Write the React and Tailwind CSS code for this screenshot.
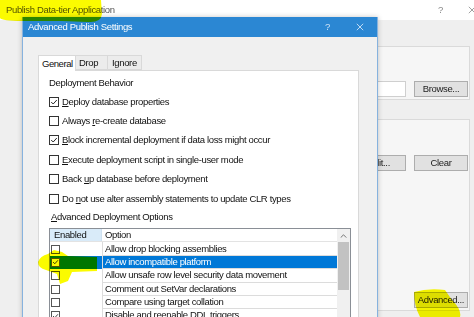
import React from "react";

const behaviors = [
  { pre: "", key: "D", post: "eploy database properties", checked: true },
  { pre: "Always ", key: "r", post: "e-create database", checked: false },
  { pre: "", key: "B", post: "lock incremental deployment if data loss might occur", checked: true },
  { pre: "", key: "E", post: "xecute deployment script in single-user mode", checked: false },
  { pre: "Back ", key: "u", post: "p database before deployment", checked: false },
  { pre: "Do ", key: "n", post: "ot use alter assembly statements to update CLR types", checked: false },
];

const options = [
  { label: "Allow drop blocking assemblies", checked: false },
  { label: "Allow incompatible platform", checked: true, selected: true },
  { label: "Allow unsafe row level security data movement", checked: false },
  { label: "Comment out SetVar declarations", checked: false },
  { label: "Compare using target collation", checked: false },
  { label: "Disable and reenable DDL triggers", checked: true },
];

const CheckBox = ({ checked, size = "h-[10px] w-[10px]", border = "border-[#333]" }) => (
  <span className={`flex shrink-0 items-center justify-center border bg-white ${size} ${border}`}>
    {checked && (
      <svg viewBox="0 0 10 10" className="h-[8px] w-[8px]">
        <path d="M1.5 5 L4 7.5 L8.5 2.5" fill="none" stroke="#1f1f1f" strokeWidth="1.2" />
      </svg>
    )}
  </span>
);

const Btn = ({ children, className = "" }) => (
  <div className={`flex h-[16px] w-[54px] shrink-0 items-center justify-center whitespace-nowrap border border-[#adadad] bg-[#e1e1e1] text-[#222] ${className}`}>
    {children}
  </div>
);

const CloseX = ({ color }) => (
  <svg viewBox="0 0 10 10" className="h-[8px] w-[8px]">
    <path d="M1 1 L9 9 M9 1 L1 9" stroke={color} strokeWidth="1" />
  </svg>
);

export default function App() {
  return (
    <div className="relative h-[317px] w-[474px] overflow-hidden bg-[#efefef] font-['Liberation_Sans',Arial,sans-serif] text-[9.5px] leading-[12px] tracking-[-0.35px] text-[#111]">
      {/* background window: Publish Data-tier Application */}
      <div className="flex h-full flex-col">
        <div className="flex h-[20px] shrink-0 items-center bg-white pl-[6px] text-[#555]">
          <span>Publish Data-tier Application</span>
          <span className="ml-auto mr-[25px] text-[#888]">?</span>
          <span className="-mr-[2px]">
            <CloseX color="#888" />
          </span>
        </div>
        <div className="flex flex-1 flex-col pl-[30px] pr-[4px]">
          <div className="mt-[26px] flex h-[54px] items-end justify-end gap-[8px] border border-[#dadada] bg-[#f6f6f6] pb-[2px] pr-[1px]">
            <div className="h-[16px] w-[60px] border border-[#cfcfcf] bg-white" />
            <Btn>Browse...</Btn>
          </div>
          <div className="mt-[19px] flex h-[192px] flex-col border border-[#dadada] bg-[#f6f6f6] pb-[2px] pr-[1px] pt-[35px]">
            <div className="flex justify-end gap-[8px]">
              <Btn>Edit...</Btn>
              <Btn>Clear</Btn>
            </div>
            <div className="mt-auto flex justify-end">
              <Btn className="border-[#7a7a7a]">Advanced...</Btn>
            </div>
          </div>
        </div>
      </div>

      {/* dialog: Advanced Publish Settings */}
      <div className="absolute left-[22px] top-[17px] flex h-[310px] w-[356px] flex-col border-x border-b border-[#86b2de] bg-[#f0f0f0] shadow-[0_0_5px_rgba(0,0,0,0.22)]">
        <div className="flex h-[20px] shrink-0 items-center bg-[#2b87d3] pl-[5px] text-white">
          <span>Advanced Publish Settings</span>
          <span className="ml-auto text-[#cfe3f5]">?</span>
          <span className="ml-[26px] mr-[13px]">
            <CloseX color="#e6f0fa" />
          </span>
        </div>

        <div className="ml-[15px] mt-[18px] flex h-[15px] shrink-0 items-end">
          <div className="relative z-10 -mb-px flex h-[16px] w-[38px] shrink-0 items-center whitespace-nowrap border border-b-0 border-[#d9d9d9] bg-white pl-[3px] tracking-[-0.45px]">
            General
          </div>
          <div className="flex h-[15px] w-[32px] shrink-0 items-center border border-l-0 border-[#d9d9d9] bg-[#ececec] pl-[3px]">
            Drop
          </div>
          <div className="flex h-[15px] w-[34px] shrink-0 items-center border border-l-0 border-[#d9d9d9] bg-[#ececec] pl-[4px]">
            Ignore
          </div>
        </div>

        <div className="ml-[15px] w-[321px] flex-1 border border-[#d9d9d9] bg-white pl-[10px]">
          <div className="mt-[6px]">Deployment Behavior</div>
          <div className="mt-[3px] flex flex-col">
            {behaviors.map((b) => (
              <div key={b.post} className="flex h-[19.4px] items-center gap-[3px]">
                <CheckBox checked={b.checked} />
                <span className="whitespace-nowrap">
                  {b.pre}
                  <span className="underline">{b.key}</span>
                  {b.post}
                </span>
              </div>
            ))}
          </div>
          <div className="mt-[3px] pl-[2px]">
            <span className="underline">A</span>dvanced Deployment Options
          </div>

          <div className="mt-[5px] flex w-[302px] border border-[#8a8f96]">
            <div className="flex w-[287px] flex-col">
              <div className="flex h-[13px] border-b border-[#e3e3e3]">
                <div className="flex w-[52px] items-center border-r border-[#cfe1f0] bg-[#d9ebf9] pl-[4px]">
                  Enabled
                </div>
                <div className="flex flex-1 items-center pl-[3px]">Option</div>
              </div>
              {options.map((o) => (
                <div
                  key={o.label}
                  className={`flex h-[13.4px] ${o.selected ? "bg-[#0078d7] text-white" : "bg-white"}`}
                >
                  <div className="flex w-[52px] items-center pl-[1px]">
                    <CheckBox checked={o.checked} size="h-[9px] w-[9px]" border="border-[#555]" />
                  </div>
                  <div className="flex flex-1 items-center whitespace-nowrap border-b border-l border-[#dcdcdc] pl-[2px]">
                    {o.label}
                  </div>
                </div>
              ))}
            </div>
            <div className="flex w-[13px] flex-col bg-[#f0f0f0]">
              <div className="flex h-[13px] items-center justify-center">
                <svg viewBox="0 0 8 5" className="h-[4px] w-[7px]">
                  <path d="M0.5 4.5 L4 1 L7.5 4.5" fill="none" stroke="#555" strokeWidth="1" />
                </svg>
              </div>
              <div className="mx-[1px] h-[48px] bg-[#c2c2c2]" />
            </div>
          </div>
        </div>
      </div>

      {/* highlighter marks */}
      <svg
        className="pointer-events-none absolute inset-0 h-[317px] w-[474px] mix-blend-multiply"
        viewBox="0 0 474 317"
      >
        <path
          d="M0 0 L101 0 L102 14 Q101 23 88 22 L62 21 L22 21 Q2 21 0 18 Z"
          fill="#fbfb00"
        />
        <path
          d="M38 262 Q40 256 48 254 L54 250 L62 252 L68 256 L97 257 L97 271 L72 272 L68 281 L60 284 L57 274 L46 270 Q38 268 38 262 Z"
          fill="#fbfb00"
        />
        <path
          d="M414 292 Q428 288 445 290 L452 300 Q462 310 460 317 L420 317 Q414 306 414 292 Z"
          fill="#fbfb00"
        />
      </svg>
    </div>
  );
}
